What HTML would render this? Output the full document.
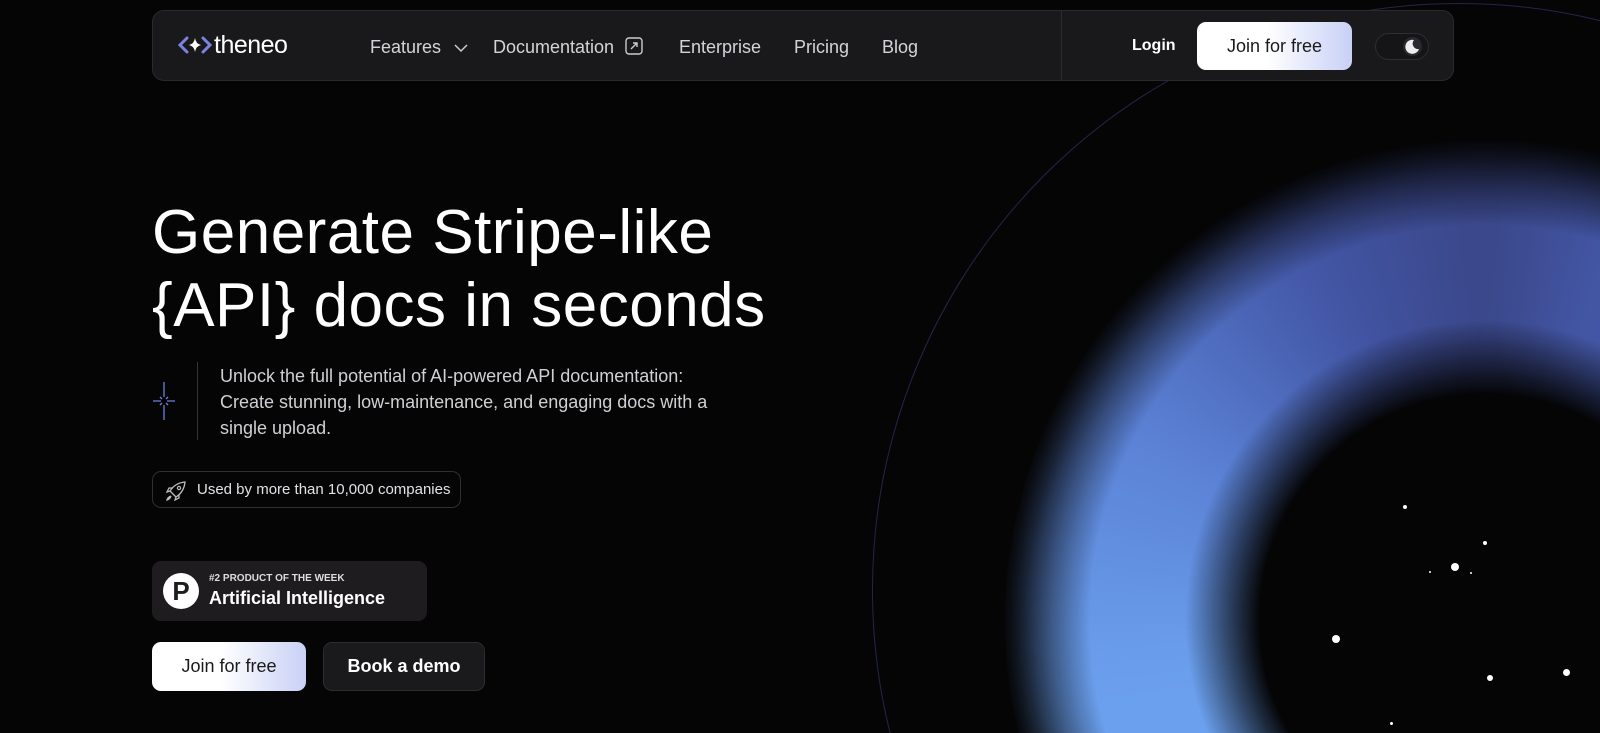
<!DOCTYPE html>
<html><head><meta charset="utf-8"><style>
*{margin:0;padding:0;box-sizing:border-box}
html,body{width:1600px;height:733px;background:#050506;overflow:hidden;font-family:"Liberation Sans",sans-serif;color:#fff}
#w{position:relative;width:1600px;height:733px;overflow:hidden}
.ring{position:absolute;left:1005px;top:140px;width:960px;height:960px;border-radius:50%;
background:conic-gradient(from 0deg,#3a4688 0deg,#4458a8 20deg,#3a4688 60deg,#4a66c0 150deg,#6aa0ee 220deg,#6ba0ee 260deg,#5a80d4 300deg,#4255a4 335deg,#3a4688 360deg);
-webkit-mask-image:radial-gradient(circle at center,transparent 0,transparent 225px,#000 300px,#000 395px,transparent 485px);
mask-image:radial-gradient(circle at center,transparent 0,transparent 225px,#000 300px,#000 395px,transparent 485px);
filter:blur(22px)}
.line{position:absolute;left:872px;top:3px;width:1174px;height:1174px;border-radius:50%;border:1px solid #23264a}
nav{position:absolute;left:152px;top:10px;width:1302px;height:71px;background:#19191b;border:1px solid #2a2a2d;border-radius:12px}
.logo{position:absolute;left:25px;top:20px;font-size:25px;letter-spacing:-0.5px}
.menu{position:absolute;top:26px;font-size:18px;color:#d4d4d8}
.sep{position:absolute;left:908px;top:0;width:1px;height:69px;background:#2c2c30}
.login{position:absolute;left:979px;top:26px;font-size:16px;font-weight:bold}
.jbtn{position:absolute;background:linear-gradient(90deg,#fff 0%,#fff 45%,#c8d0f6 100%);color:#1a1a1a;border-radius:9px;text-align:center}
.toggle{position:absolute;left:1222px;top:22px;width:54px;height:27px;border-radius:14px;border:1px solid #2e2e32;background:#151517}
h1{position:absolute;left:152px;top:196px;font-size:62px;font-weight:normal;line-height:73px;letter-spacing:0.5px}
.para{position:absolute;left:220px;top:363px;font-size:18px;line-height:26px;color:#d0d0d4;width:490px}
.vl{position:absolute;left:197px;top:362px;width:1px;height:78px;background:#333}
.pill{position:absolute;left:152px;top:471px;width:309px;height:37px;border:1px solid #2f2f33;border-radius:9px;font-size:15px;color:#e2e2e6;padding:9px 0 0 44px}
.ph{position:absolute;left:152px;top:561px;width:275px;height:60px;background:#1f1c20;border-radius:9px}
.demo{position:absolute;left:323px;top:642px;width:162px;height:49px;background:#1a1a1c;border:1px solid #2d2d31;border-radius:9px;font-size:18px;text-align:center;line-height:47px;font-weight:bold}
.star{position:absolute;background:#fff;border-radius:50%}
</style></head><body><div id="w">
<div class="ring"></div>
<div class="line"></div>
<nav>
 <div class="logo"><svg width="34" height="24" viewBox="0 0 34 24" style="vertical-align:-4px;margin-right:2px"><path d="M9 5 L2 12 L9 19" stroke="#7b82e0" stroke-width="3" fill="none" stroke-linecap="round"/><path d="M25 5 L32 12 L25 19" stroke="#7b82e0" stroke-width="3" fill="none" stroke-linecap="round"/><path d="M17 5 Q18 11 23 12 Q18 13 17 19 Q16 13 11 12 Q16 11 17 5Z" fill="#fff"/></svg>theneo</div>
 <div class="menu" style="left:217px">Features <svg width="14" height="10" style="margin-left:8px"><path d="M1 2 L7 8 L13 2" stroke="#ccc" stroke-width="1.5" fill="none"/></svg></div>
 <div class="menu" style="left:340px">Documentation <svg width="18" height="18" style="vertical-align:-2px;margin-left:6px"><rect x="1" y="1" width="16" height="16" rx="3" stroke="#ccc" stroke-width="1.4" fill="none"/><path d="M6 12 L12 6 M8 6 H12 V10" stroke="#ccc" stroke-width="1.4" fill="none"/></svg></div>
 <div class="menu" style="left:526px">Enterprise</div>
 <div class="menu" style="left:641px">Pricing</div>
 <div class="menu" style="left:729px">Blog</div>
 <div class="sep"></div>
 <div class="login">Login</div>
 <div class="jbtn" style="left:1044px;top:11px;width:155px;height:48px;line-height:48px;font-size:18px">Join for free</div>
 <div class="toggle"><div style="position:absolute;right:6px;top:3px;width:19px;height:19px;border-radius:50%;background:#2a2a2e"></div><svg width="16" height="16" style="position:absolute;right:8px;top:5px"><path d="M10 1 A7 7 0 1 0 15 10 A5.5 5.5 0 0 1 10 1Z" fill="#eee"/></svg></div>
</nav>
<h1>Generate Stripe-like<br>{API} docs in seconds</h1>
<svg style="position:absolute;left:152px;top:381px" width="24" height="40"><path d="M12 1V16 M12 24V39 M1 20H9 M15 20H23 M8 16L10 18 M16 16L14 18 M8 24L10 22 M16 24L14 22" stroke="#6f7de0" stroke-width="1.3"/></svg>
<div class="vl"></div>
<div class="para">Unlock the full potential of AI-powered API documentation: Create stunning, low-maintenance, and engaging docs with a single upload.</div>
<div class="pill"><svg style="position:absolute;left:12px;top:8px" width="22" height="22" viewBox="0 0 22 22"><path d="M8 14 L5 11 Q10 3 20 2 Q19 12 11 17Z M5 11 L2 12 L4 8 L8 8 M11 17 L10 20 L14 18 L14 14 M6 16 Q3 17 2 20 Q5 19 6 16" stroke="#bbb" stroke-width="1.3" fill="none"/><circle cx="14" cy="8" r="1.6" stroke="#bbb" stroke-width="1.2" fill="none"/></svg>Used by more than 10,000 companies</div>
<div class="ph"><div style="position:absolute;left:11px;top:12px;width:36px;height:36px;border-radius:50%;background:#fff;color:#1f1c20;font-weight:bold;font-size:26px;text-align:center;line-height:36px">P</div>
<div style="position:absolute;left:57px;top:12px;font-size:10px;font-weight:bold;color:#ddd">#2 PRODUCT OF THE WEEK</div>
<div style="position:absolute;left:57px;top:27px;font-size:18px;font-weight:bold">Artificial Intelligence</div></div>
<div class="jbtn" style="left:152px;top:642px;width:154px;height:49px;line-height:49px;font-size:18px">Join for free</div>
<div class="demo">Book a demo</div>
<div class="star" style="left:1403px;top:505px;width:4px;height:4px"></div>
<div class="star" style="left:1483px;top:541px;width:4px;height:4px"></div>
<div class="star" style="left:1451px;top:563px;width:8px;height:8px"></div>
<div class="star" style="left:1429px;top:571px;width:2px;height:2px"></div>
<div class="star" style="left:1470px;top:572px;width:2px;height:2px"></div>
<div class="star" style="left:1332px;top:635px;width:8px;height:8px"></div>
<div class="star" style="left:1487px;top:675px;width:6px;height:6px"></div>
<div class="star" style="left:1563px;top:669px;width:7px;height:7px"></div>
<div class="star" style="left:1390px;top:722px;width:3px;height:3px"></div>
</div></body></html>
